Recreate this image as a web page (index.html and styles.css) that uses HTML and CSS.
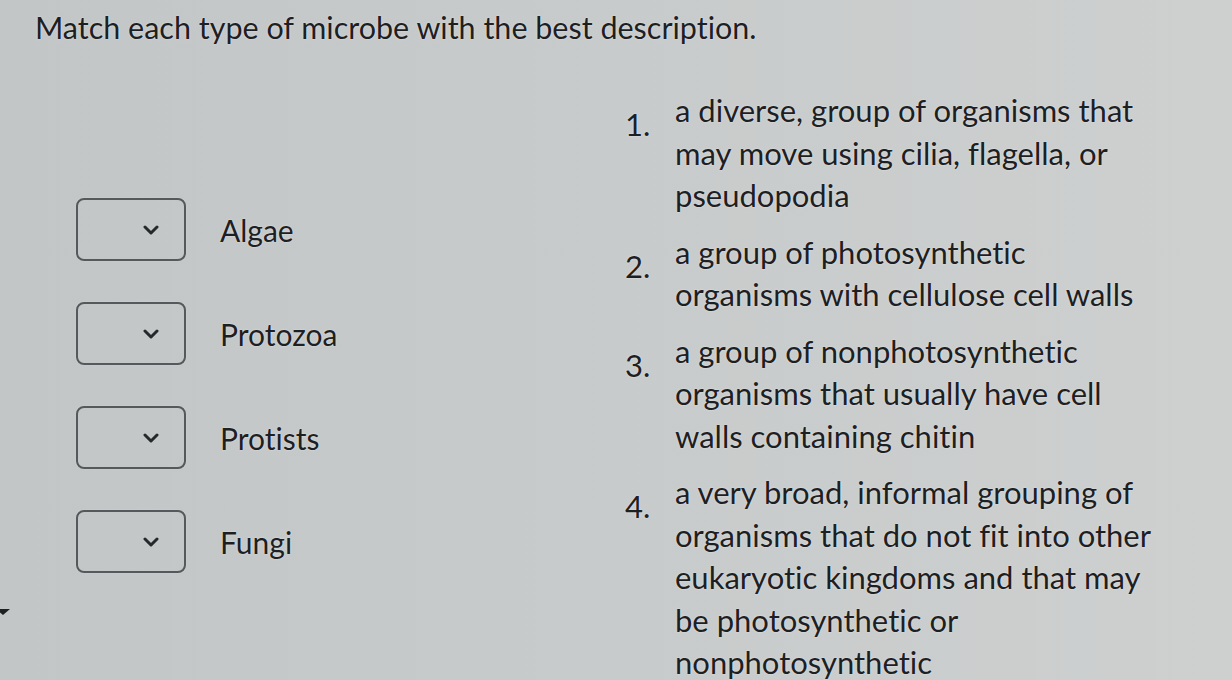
FILE: index.html
```html
<!DOCTYPE html>
<html lang="en">
<head>
    <meta charset="UTF-8">
    <meta name="viewport" content="width=device-width, initial-scale=1.0">
    <title>Matching Question</title>
    <link rel="stylesheet" href="styles.css">
</head>
<body>
    <div class="question">
        <!-- Enunciado -->
        <h2 class="question-text">Match each type of microbe with the best description.</h2>

        <div class="answers">
            <!-- Opciones a la izquierda -->
            <div class="choices">
                <div class="choice">
                    <div class="dropdown">
                        <svg width="16" height="10" viewBox="0 0 16 10"><path d="M2 2 L8 8 L14 2" fill="none" stroke="#26292b" stroke-width="3" stroke-linecap="round" stroke-linejoin="round"/></svg>
                    </div>
                    <span class="choice-label">Algae</span>
                </div>
                <div class="choice">
                    <div class="dropdown">
                        <svg width="16" height="10" viewBox="0 0 16 10"><path d="M2 2 L8 8 L14 2" fill="none" stroke="#26292b" stroke-width="3" stroke-linecap="round" stroke-linejoin="round"/></svg>
                    </div>
                    <span class="choice-label">Protozoa</span>
                </div>
                <div class="choice">
                    <div class="dropdown">
                        <svg width="16" height="10" viewBox="0 0 16 10"><path d="M2 2 L8 8 L14 2" fill="none" stroke="#26292b" stroke-width="3" stroke-linecap="round" stroke-linejoin="round"/></svg>
                    </div>
                    <span class="choice-label">Protists</span>
                </div>
                <div class="choice">
                    <div class="dropdown">
                        <svg width="16" height="10" viewBox="0 0 16 10"><path d="M2 2 L8 8 L14 2" fill="none" stroke="#26292b" stroke-width="3" stroke-linecap="round" stroke-linejoin="round"/></svg>
                    </div>
                    <span class="choice-label">Fungi</span>
                </div>
            </div>

            <!-- Descripciones numeradas -->
            <div class="descriptions">
                <div class="description">
                    <span class="number">1.</span>
                    <p>a diverse, group of organisms that may move using cilia, flagella, or pseudopodia</p>
                </div>
                <div class="description">
                    <span class="number">2.</span>
                    <p>a group of photosynthetic organisms with cellulose cell walls</p>
                </div>
                <div class="description">
                    <span class="number">3.</span>
                    <p>a group of nonphotosynthetic organisms that usually have cell walls containing chitin</p>
                </div>
                <div class="description">
                    <span class="number">4.</span>
                    <p>a very broad, informal grouping of organisms that do not fit into other eukaryotic kingdoms and that may be photosynthetic or nonphotosynthetic</p>
                </div>
            </div>
        </div>
    </div>
    <span class="edge-arrow"></span>
</body>
</html>
```

FILE: styles.css
```css
* {
    margin: 0;
    padding: 0;
    box-sizing: border-box;
}

body {
    font-family: Lato, "Open Sans", sans-serif;
    font-variant-ligatures: none;
    background: linear-gradient(90deg, #c3c6c6 0%, #c8cbcb 50%, #cdd0cf 100%);
    color: #1d2023;
    height: 680px;
    overflow: hidden;
    position: relative;
}

.question {
    padding: 10px 0 0 35px;
}

.question-text {
    font-size: 30.5px;
    font-weight: 400;
    line-height: 35px;
    text-shadow: 0 0 2px rgba(255, 255, 255, 0.6);
}

.answers {
    display: flex;
    margin-top: 44px;
}

/* Columna de opciones */
.choices {
    width: 590px;
    padding: 109px 0 0 41px;
    display: flex;
    flex-direction: column;
    gap: 41px;
}

.choice {
    display: flex;
    align-items: center;
    gap: 34px;
}

.dropdown {
    width: 110px;
    height: 63px;
    border: 2px solid #55595b;
    border-radius: 8px;
    display: flex;
    align-items: center;
    justify-content: flex-end;
    padding-right: 25px;
    box-shadow: 0 0 1px rgba(255, 255, 255, 0.6);
}

.choice-label {
    font-size: 30px;
    text-shadow: 0 0 2px rgba(255, 255, 255, 0.6);
}

/* Columna de descripciones */
.descriptions {
    display: flex;
    flex-direction: column;
    gap: 14px;
}

.description {
    display: flex;
    font-size: 31px;
    line-height: 42.5px;
    text-shadow: 0 0 2px rgba(255, 255, 255, 0.6);
}

.number {
    width: 50px;
    padding-top: 14px;
}

.description p {
    width: 484px;
}

.edge-arrow {
    position: absolute;
    left: -4px;
    top: 609px;
    border-left: 7px solid transparent;
    border-right: 7px solid transparent;
    border-top: 6px solid #1e2022;
}
```
